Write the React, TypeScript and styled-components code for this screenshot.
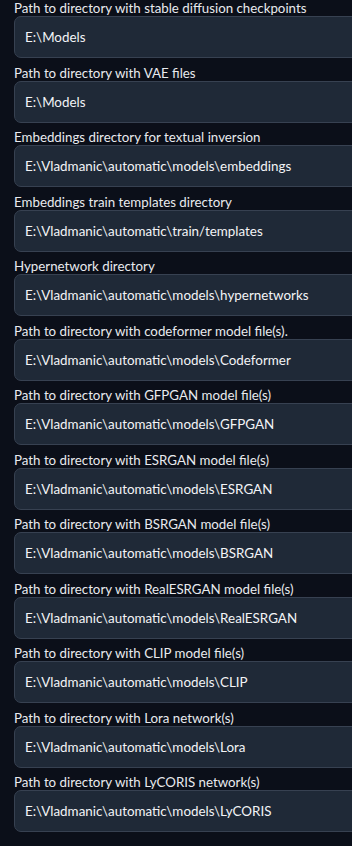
import React from "react";
import styled, { createGlobalStyle } from "styled-components";

const GlobalStyle = createGlobalStyle`
  html, body {
    margin: 0;
    padding: 0;
    background: #0b0f19;
  }
  body {
    font-family: Lato, "Noto Sans", sans-serif;
  }
`;

const Page = styled.div`
  display: flex;
  flex-direction: column;
  gap: 6.5px;
  padding-left: 14px;
  width: 352px;
  height: 846px;
  box-sizing: border-box;
  overflow: hidden;
  background: #0b0f19;
`;

const Field = styled.label`
  display: flex;
  flex-direction: column;
`;

const FieldTitle = styled.span`
  font-size: 13.3px;
  line-height: 16px;
  color: #e8eaee;
  white-space: nowrap;
`;

const PathInput = styled.input`
  box-sizing: border-box;
  width: calc(100% + 12px);
  height: 42px;
  padding: 0 10px;
  background: #1f2937;
  border: 1px solid #374151;
  border-radius: 7px;
  color: #f3f4f6;
  font-family: inherit;
  font-size: 13.4px;
  outline: none;
`;

const fields: [string, string][] = [
  ["Path to directory with stable diffusion checkpoints", "E:\\Models"],
  ["Path to directory with VAE files", "E:\\Models"],
  ["Embeddings directory for textual inversion", "E:\\Vladmanic\\automatic\\models\\embeddings"],
  ["Embeddings train templates directory", "E:\\Vladmanic\\automatic\\train/templates"],
  ["Hypernetwork directory", "E:\\Vladmanic\\automatic\\models\\hypernetworks"],
  ["Path to directory with codeformer model file(s).", "E:\\Vladmanic\\automatic\\models\\Codeformer"],
  ["Path to directory with GFPGAN model file(s)", "E:\\Vladmanic\\automatic\\models\\GFPGAN"],
  ["Path to directory with ESRGAN model file(s)", "E:\\Vladmanic\\automatic\\models\\ESRGAN"],
  ["Path to directory with BSRGAN model file(s)", "E:\\Vladmanic\\automatic\\models\\BSRGAN"],
  ["Path to directory with RealESRGAN model file(s)", "E:\\Vladmanic\\automatic\\models\\RealESRGAN"],
  ["Path to directory with CLIP model file(s)", "E:\\Vladmanic\\automatic\\models\\CLIP"],
  ["Path to directory with Lora network(s)", "E:\\Vladmanic\\automatic\\models\\Lora"],
  ["Path to directory with LyCORIS network(s)", "E:\\Vladmanic\\automatic\\models\\LyCORIS"],
];

const App: React.FC = () => (
  <>
    <GlobalStyle />
    <Page>
      {fields.map(([title, value]) => (
        <Field key={title}>
          <FieldTitle>{title}</FieldTitle>
          <PathInput defaultValue={value} readOnly />
        </Field>
      ))}
    </Page>
  </>
);

export default App;
